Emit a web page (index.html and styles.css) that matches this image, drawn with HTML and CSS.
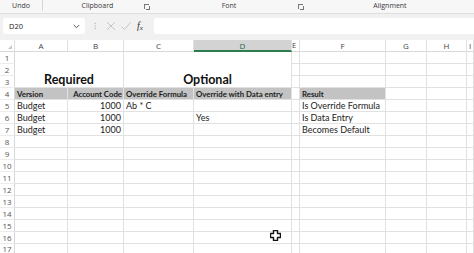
FILE: index.html
```html
<!DOCTYPE html>
<html>
<head>
<meta charset="utf-8">
<link rel="stylesheet" href="styles.css">
</head>
<body>
<div class="ribbon">
  <div class="grp g-undo">Undo</div>
  <div class="grp g-clip">Clipboard<span class="launch"></span></div>
  <div class="grp g-font">Font<span class="launch"></span></div>
  <div class="grp g-align">Alignment</div>
</div>
<div class="fbar">
  <div class="namebox"><span>D20</span><svg class="chev" width="7" height="5" viewBox="0 0 7 5"><path d="M0.8 1 L3.5 3.7 L6.2 1" fill="none" stroke="#555" stroke-width="1"/></svg></div>
  <div class="dots">⁝</div>
  <svg class="ic" width="12" height="12" viewBox="0 0 12 12"><path d="M2 2 L10 10 M10 2 L2 10" stroke="#c4c4c4" stroke-width="1"/></svg>
  <svg class="ic" width="12" height="12" viewBox="0 0 12 12"><path d="M1.5 6.5 L4.5 9.5 L10.5 2.5" fill="none" stroke="#c4c4c4" stroke-width="1"/></svg>
  <div class="fx"><i>f</i><sub>x</sub></div>
  <div class="finput"></div>
</div>
<div class="sheet">
  <div class="ch corner"><span class="tri"></span></div>
  <div class="ch">A</div><div class="ch">B</div><div class="ch">C</div><div class="ch sel">D</div><div class="ch e">E</div><div class="ch">F</div><div class="ch">G</div><div class="ch">H</div><div class="ch">I</div>

  <div class="rh">1</div><div class="c merge m1">Required</div><div class="c merge m2">Optional</div><div class="c"></div><div class="c"></div><div class="c"></div><div class="c"></div><div class="c"></div>
  <div class="rh">2</div><div class="c"></div><div class="c"></div><div class="c"></div><div class="c"></div><div class="c"></div>
  <div class="rh">3</div><div class="c"></div><div class="c"></div><div class="c"></div><div class="c"></div><div class="c"></div>

  <div class="rh">4</div><div class="c hd">Version</div><div class="c hd r">Account Code</div><div class="c hd">Override Formula</div><div class="c hd">Override with Data entry</div><div class="c"></div><div class="c hd">Result</div><div class="c"></div><div class="c"></div><div class="c"></div>
  <div class="rh">5</div><div class="c">Budget</div><div class="c r">1000</div><div class="c">Ab * C</div><div class="c"></div><div class="c"></div><div class="c">Is Override Formula</div><div class="c"></div><div class="c"></div><div class="c"></div>
  <div class="rh">6</div><div class="c">Budget</div><div class="c r">1000</div><div class="c"></div><div class="c">Yes</div><div class="c"></div><div class="c">Is Data Entry</div><div class="c"></div><div class="c"></div><div class="c"></div>
  <div class="rh">7</div><div class="c">Budget</div><div class="c r">1000</div><div class="c"></div><div class="c"></div><div class="c"></div><div class="c">Becomes Default</div><div class="c"></div><div class="c"></div><div class="c"></div>
  <div class="rh">8</div><div class="c"></div><div class="c"></div><div class="c"></div><div class="c"></div><div class="c"></div><div class="c"></div><div class="c"></div><div class="c"></div><div class="c"></div>
  <div class="rh">9</div><div class="c"></div><div class="c"></div><div class="c"></div><div class="c"></div><div class="c"></div><div class="c"></div><div class="c"></div><div class="c"></div><div class="c"></div>
  <div class="rh">10</div><div class="c"></div><div class="c"></div><div class="c"></div><div class="c"></div><div class="c"></div><div class="c"></div><div class="c"></div><div class="c"></div><div class="c"></div>
  <div class="rh">11</div><div class="c"></div><div class="c"></div><div class="c"></div><div class="c"></div><div class="c"></div><div class="c"></div><div class="c"></div><div class="c"></div><div class="c"></div>
  <div class="rh">12</div><div class="c"></div><div class="c"></div><div class="c"></div><div class="c"></div><div class="c"></div><div class="c"></div><div class="c"></div><div class="c"></div><div class="c"></div>
  <div class="rh">13</div><div class="c"></div><div class="c"></div><div class="c"></div><div class="c"></div><div class="c"></div><div class="c"></div><div class="c"></div><div class="c"></div><div class="c"></div>
  <div class="rh">14</div><div class="c"></div><div class="c"></div><div class="c"></div><div class="c"></div><div class="c"></div><div class="c"></div><div class="c"></div><div class="c"></div><div class="c"></div>
  <div class="rh">15</div><div class="c"></div><div class="c"></div><div class="c"></div><div class="c"></div><div class="c"></div><div class="c"></div><div class="c"></div><div class="c"></div><div class="c"></div>
  <div class="rh">16</div><div class="c"></div><div class="c"></div><div class="c"></div><div class="c"></div><div class="c"></div><div class="c"></div><div class="c"></div><div class="c"></div><div class="c"></div>
  <div class="rh last">17</div><div class="c"></div><div class="c"></div><div class="c"></div><div class="c"></div><div class="c"></div><div class="c"></div><div class="c"></div><div class="c"></div><div class="c"></div>
  <svg class="cursor" width="11" height="11" viewBox="0 0 11 11"><path d="M3.5 0.5 H7.5 V3.5 H10.5 V7.5 H7.5 V10.5 H3.5 V7.5 H0.5 V3.5 H3.5 Z" fill="#fff" stroke="#111" stroke-width="1.4" stroke-linejoin="round"/></svg>
</div>
</body>
</html>
```

FILE: styles.css
```css
html, body { margin: 0; padding: 0; }
body {
  width: 474px;
  height: 253px;
  overflow: hidden;
  background: #fff;
  font-family: Lato, "Open Sans", sans-serif;
}
.ribbon {
  height: 13px;
  background: #f7f7f7;
  border-bottom: 1px solid #dedede;
  display: flex;
  font-family: "Open Sans", sans-serif;
  font-size: 7px;
  color: #3a3a3a;
  line-height: 12px;
}
.grp { position: relative; text-align: center; }
.g-undo { width: 42px; border-right: 1px solid #d6d6d6; height: 11px; }
.g-clip { width: 109px; }
.g-font { width: 154px; }
.g-align { width: 168px; }
.launch {
  position: absolute;
  right: 3px;
  top: 4px;
  width: 4px;
  height: 4px;
  border-top: 1px solid #777;
  border-left: 1px solid #777;
}
.launch::after {
  content: "";
  position: absolute;
  left: 1px; top: 1px;
  width: 3px; height: 3px;
  border-right: 1px solid #777;
  border-bottom: 1px solid #777;
}
.fbar {
  height: 26px;
  background: #f1f1f1;
  display: flex;
  align-items: flex-start;
  padding-top: 4px;
  box-sizing: border-box;
}
.namebox {
  margin-left: 3px;
  width: 82px;
  height: 16px;
  background: #fff;
  border-radius: 2px;
  display: flex;
  align-items: center;
  justify-content: space-between;
  box-sizing: border-box;
  padding: 0 5px 0 6px;
  font-family: "Open Sans", sans-serif;
  font-size: 7.5px;
  color: #222;
}
.dots { width: 14px; text-align: center; color: #aaa; font-size: 9px; line-height: 16px; margin-left: 3px; }
.ic { margin-top: 2px; margin-left: 3px; }
.fx {
  margin-left: 5px;
  font-family: "Liberation Serif", serif;
  font-size: 10px;
  line-height: 16px;
  color: #333;
  width: 12px;
}
.fx sub { font-size: 7px; font-style: italic; vertical-align: -1px; }
.finput {
  margin-left: 5px;
  flex: 1;
  height: 16px;
  background: #fff;
  border-radius: 2px 0 0 2px;
}
.sheet {
  position: relative;
  display: grid;
  grid-template-columns: 15px 53px 56px 70px 98px 8px 86px 41px 40px 1fr;
  grid-auto-rows: 12px;
  font-size: 9px;
  color: #222;
}
.ch {
  background: #fff;
  border-right: 1px solid #e1e1e1;
  border-bottom: 1px solid #d8d8d8;
  text-align: center;
  font-size: 8px;
  line-height: 11px;
  color: #444;
  box-sizing: border-box;
  font-family: "Open Sans", sans-serif;
}
.ch.corner { position: relative; }
.tri {
  position: absolute;
  right: 2px; bottom: 2px;
  width: 0; height: 0;
  border-left: 4px solid transparent;
  border-bottom: 4px solid #c8c8c8;
}
.ch.sel {
  background: #d3d3d3;
  border-bottom: 2px solid #2e7d4f;
  color: #1e6b3e;
}
.ch.e { text-align: left; font-size: 7.5px; }
.rh {
  grid-column: 1;
  background: #fff;
  border-right: 1px solid #d8d8d8;
  border-bottom: 1px solid #ececec;
  font-size: 8px;
  line-height: 12px;
  color: #555;
  text-align: center;
  box-sizing: border-box;
  font-family: "Open Sans", sans-serif;
}
.rh.last { line-height: 9px; }
.c {
  border-right: 1px solid #e1e1e1;
  border-bottom: 1px solid #e1e1e1;
  box-sizing: border-box;
  padding: 0 2px;
  line-height: 12px;
  white-space: nowrap;
  overflow: hidden;
}
.c.r { text-align: right; }
.c.hd { background: #c3c3c3; font-weight: bold; font-size: 7.8px; color: #1c1c1c; padding: 0 1px 0 2px; }
.merge {
  grid-row: span 3;
  display: flex;
  align-items: flex-end;
  justify-content: center;
  font-weight: bold;
  font-size: 12.5px;
  line-height: 14px;
  color: #111;
}
.m1 { grid-column: 2 / span 2; }
.m2 { grid-column: 4 / span 2; }
.cursor { position: absolute; left: 270px; top: 190px; }
```
